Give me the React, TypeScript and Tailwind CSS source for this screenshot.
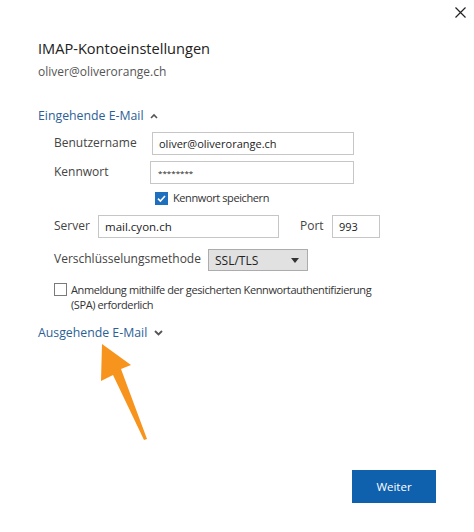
import React from "react";

const font = { fontFamily: '"Open Sans", "Noto Sans", Arial, sans-serif' };

function Check({ checked }: { checked?: boolean }) {
  return checked ? (
    <span className="flex h-[13px] w-[13px] items-center justify-center bg-[#1f6fbf]">
      <svg width="11" height="11" viewBox="0 0 11 11">
        <path d="M2 5.6 L4.4 8 L9 3" fill="none" stroke="#fff" strokeWidth="1.6" />
      </svg>
    </span>
  ) : (
    <span className="block h-[13px] w-[13px] border border-[#7a7a7a] bg-white" />
  );
}

function Field({ value, className }: { value: string; className: string }) {
  return (
    <div className={`flex h-[23px] items-center border border-[#c6c6c6] bg-white px-[6px] text-[#222] ${className}`}>
      {value}
    </div>
  );
}

export default function App() {
  return (
    <div className="relative h-[532px] w-[474px] overflow-hidden bg-white text-[#444]" style={font}>
      {/* close button */}
      <svg className="absolute left-[455px] top-[7px]" width="11" height="11" viewBox="0 0 11 11">
        <path d="M0.5 0.5 L10.5 10.5 M10.5 0.5 L0.5 10.5" stroke="#222" strokeWidth="1.2" />
      </svg>

      <div className="flex flex-col pl-[38px] pt-[37px]">
        <h1 className="text-[14.6px] leading-[22px] text-[#222]">IMAP-Kontoeinstellungen</h1>
        <div className="mt-[4px] text-[12px] leading-[18px] text-[#555]">oliver@oliverorange.ch</div>

        <div className="mt-[26px] flex items-center gap-[6px] text-[12.3px] leading-[18px] text-[#2c5f97]">
          <span>Eingehende E-Mail</span>
          <svg width="8" height="6" viewBox="0 0 8 6">
            <path d="M1 5 L4 2 L7 5" fill="none" stroke="#555" strokeWidth="1.6" />
          </svg>
        </div>

        <div className="flex flex-col pl-[16px] text-[12px] leading-[18px]">
          <div className="mt-[7px] flex h-[23px] items-center">
            <span className="-mt-[2px] w-[98px]">Benutzername</span>
            <Field value="oliver@oliverorange.ch" className="w-[202px] text-[11px]" />
          </div>
          <div className="mt-[6px] flex h-[23px] items-center">
            <span className="-mt-[2px] w-[96px]">Kennwort</span>
            <Field value="********" className="w-[204px] pl-[7px] text-[8px]" />
          </div>
          <div className="mt-[6px] flex h-[16px] items-center pl-[101px]">
            <Check checked />
            <span className="ml-[5px] text-[11px] leading-[16px] tracking-[-0.4px] text-[#333]">Kennwort speichern</span>
          </div>
          <div className="mt-[9px] flex h-[23px] items-center">
            <span className="-mt-[2px] w-[44px]">Server</span>
            <Field value="mail.cyon.ch" className="w-[181px] text-[11.5px]" />
            <span className="-mt-[2px] ml-[21px] w-[32px]">Port</span>
            <Field value="993" className="w-[48px] text-[11px]" />
          </div>
          <div className="mt-[11px] flex h-[22px] items-center">
            <span className="-mt-[2px] w-[154px]">Verschlüsselungsmethode</span>
            <div className="flex h-[22px] w-[100px] items-center justify-between border border-[#acacac] bg-[#e1e1e1] pl-[6px] pr-[8px] text-[12px] text-[#222]">
              <span className="mt-[2px]">SSL/TLS</span>
              <svg width="8" height="5" viewBox="0 0 8 5">
                <path d="M0 0 L8 0 L4 5 Z" fill="#333" />
              </svg>
            </div>
          </div>
          <div className="mt-[11px] flex items-start">
            <span className="mt-[1px]">
              <Check />
            </span>
            <span className="ml-[4px] text-[11px] leading-[15px] tracking-[-0.4px] text-[#333]">
              Anmeldung mithilfe der gesicherten Kennwortauthentifizierung
              <br />
              (SPA) erforderlich
            </span>
          </div>
        </div>

        <div className="mt-[12px] flex items-center gap-[7px] text-[12.3px] leading-[18px] text-[#2c5f97]">
          <span>Ausgehende E-Mail</span>
          <svg width="9" height="6" viewBox="0 0 9 6">
            <path d="M1 1 L4.5 4.5 L8 1" fill="none" stroke="#555" strokeWidth="1.8" />
          </svg>
        </div>
      </div>

      {/* pointer arrow */}
      <svg className="absolute left-0 top-0" width="474" height="532" viewBox="0 0 474 532">
        <polygon
          points="102,344 131,365 121,369 147,439 144,440 113,375 101,381"
          fill="#f7941d"
        />
      </svg>

      <div className="absolute left-[352px] top-[470px]">
        <button className="flex h-[33px] w-[84px] items-center justify-center bg-[#0f61ae] text-[11.5px] font-medium text-white">
          Weiter
        </button>
      </div>
    </div>
  );
}
